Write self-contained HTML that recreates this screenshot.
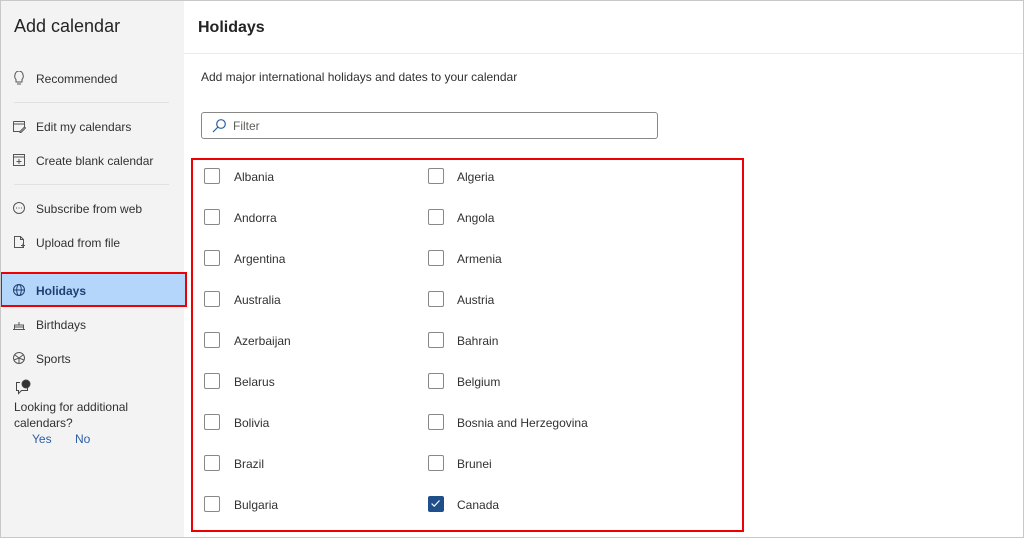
<!DOCTYPE html>
<html><head><style>
*{margin:0;padding:0;box-sizing:border-box}
body{width:1024px;height:538px;font-family:"Liberation Sans",sans-serif;background:#fff;position:relative;overflow:hidden;color:#323130}
.frame{position:absolute;left:0;top:0;width:1024px;height:538px;border:1px solid #c8c8c8;pointer-events:none;z-index:9}
.side{position:absolute;left:0;top:0;width:184px;height:538px;background:#f3f3f3}
.t{position:absolute;font-size:12px;white-space:nowrap}
.h1{position:absolute;left:14px;top:16px;font-size:18px;color:#242424}
.sep{position:absolute;left:14px;width:155px;height:1px;background:#e1e1e1}
.ic{position:absolute;left:12px;width:14px;height:14px}
.cb{position:absolute;width:16px;height:16px;border:1px solid #8a8886;border-radius:2px;background:#fff}
</style></head><body>
<div class="side"></div>
<div class="h1">Add calendar</div>
<svg class="ic" style="top:71px" viewBox="0 0 14 14" fill="none" stroke="#555" stroke-width="1"><path d="M4 8.5C2.5 7 2.5 5 3 4a4 4 0 0 1 8 0c.5 1 .5 3-1 4.5V11H4z M5 13h4"/></svg>
<div class="t" style="left:36px;top:72px">Recommended</div>
<div class="sep" style="top:102px"></div>
<svg class="ic" style="top:119px" viewBox="0 0 14 14" fill="none" stroke="#555" stroke-width="1"><path d="M1.5 2.5h11v5M1.5 2.5v10h6M1.5 5h11M8 12.5l4.5-4.5 1 1L9 13.5H8z"/></svg>
<div class="t" style="left:36px;top:120px">Edit my calendars</div>
<svg class="ic" style="top:153px" viewBox="0 0 14 14" fill="none" stroke="#555" stroke-width="1"><path d="M1.5 1.5h11v11h-11zM1.5 4h11M7 6v5M4.5 8.5h5"/></svg>
<div class="t" style="left:36px;top:154px">Create blank calendar</div>
<div class="sep" style="top:184px"></div>
<svg class="ic" style="top:201px" viewBox="0 0 14 14" fill="none" stroke="#555" stroke-width="1"><circle cx="7" cy="7" r="5.5"/><path d="M4 7h1M6.5 7h1M9 7h1"/></svg>
<div class="t" style="left:36px;top:202px">Subscribe from web</div>
<svg class="ic" style="top:235px" viewBox="0 0 14 14" fill="none" stroke="#555" stroke-width="1"><path d="M2.5 1.5h6l3 3v8h-9zM8.5 1.5v3h3M9 10.5h4M11 8.5v4"/></svg>
<div class="t" style="left:36px;top:236px">Upload from file</div>
<div style="position:absolute;left:0;top:272px;width:187px;height:35px;background:#b4d6fa;border:2px solid #e00"></div>
<svg class="ic" style="top:283px" viewBox="0 0 14 14" fill="none" stroke="#1f3f73" stroke-width="1"><circle cx="7" cy="7" r="5.5"/><ellipse cx="7" cy="7" rx="2.3" ry="5.5"/><path d="M1.5 7h11"/></svg>
<div class="t" style="left:36px;top:284px;font-weight:bold;color:#1f3f73">Holidays</div>
<svg class="ic" style="top:317px" viewBox="0 0 14 14" fill="none" stroke="#555" stroke-width="1"><path d="M1 12.5h12M2.5 12.5V8h9v4.5M2.5 10h9M7 8V5"/></svg>
<div class="t" style="left:36px;top:318px">Birthdays</div>
<svg class="ic" style="top:351px" viewBox="0 0 14 14" fill="none" stroke="#555" stroke-width="1"><circle cx="7" cy="7" r="5.5"/><path d="M3 4l4 3 4-3M7 7v5.5M2 9l5-2 5 2"/></svg>
<div class="t" style="left:36px;top:352px">Sports</div>
<svg style="position:absolute;left:14px;top:379px;width:17px;height:16px" viewBox="0 0 17 16" fill="none" stroke="#444" stroke-width="1"><path d="M6 3.5H2.5v8h2v3l3-3h6v-3"/><circle cx="12" cy="5" r="4" fill="#333"/></svg>
<div class="t" style="left:14px;top:399px;line-height:16px;color:#323130">Looking for additional<br>calendars?</div>
<div class="t" style="left:32px;top:432px;color:#2b5ea8">Yes</div>
<div class="t" style="left:75px;top:432px;color:#2b5ea8">No</div>

<div class="t" style="left:198px;top:19px;font-size:16px;font-weight:bold;color:#242424">Holidays</div>
<div style="position:absolute;left:184px;top:53px;width:840px;height:1px;background:#ebebeb"></div>
<div class="t" style="left:201px;top:70px;color:#323130">Add major international holidays and dates to your calendar</div>
<div style="position:absolute;left:201px;top:112px;width:457px;height:27px;border:1px solid #8a8886;border-radius:3px"></div>
<svg style="position:absolute;left:211px;top:118px;width:16px;height:16px" viewBox="0 0 16 16" fill="none" stroke="#2b5ea8" stroke-width="1.2"><circle cx="10" cy="6" r="4.3"/><path d="M7 9l-5 5"/></svg>
<div class="t" style="left:233px;top:119px;color:#605e5c">Filter</div>
<div style="position:absolute;left:191px;top:158px;width:553px;height:374px;border:2px solid #e00"></div>
<div id="list"></div>
<script></script>
<div class="cb" style="left:204px;top:168px"></div><div class="t" style="left:234px;top:170px">Albania</div>
<div class="cb" style="left:428px;top:168px"></div><div class="t" style="left:457px;top:170px">Algeria</div>
<div class="cb" style="left:204px;top:209px"></div><div class="t" style="left:234px;top:211px">Andorra</div>
<div class="cb" style="left:428px;top:209px"></div><div class="t" style="left:457px;top:211px">Angola</div>
<div class="cb" style="left:204px;top:250px"></div><div class="t" style="left:234px;top:252px">Argentina</div>
<div class="cb" style="left:428px;top:250px"></div><div class="t" style="left:457px;top:252px">Armenia</div>
<div class="cb" style="left:204px;top:291px"></div><div class="t" style="left:234px;top:293px">Australia</div>
<div class="cb" style="left:428px;top:291px"></div><div class="t" style="left:457px;top:293px">Austria</div>
<div class="cb" style="left:204px;top:332px"></div><div class="t" style="left:234px;top:334px">Azerbaijan</div>
<div class="cb" style="left:428px;top:332px"></div><div class="t" style="left:457px;top:334px">Bahrain</div>
<div class="cb" style="left:204px;top:373px"></div><div class="t" style="left:234px;top:375px">Belarus</div>
<div class="cb" style="left:428px;top:373px"></div><div class="t" style="left:457px;top:375px">Belgium</div>
<div class="cb" style="left:204px;top:414px"></div><div class="t" style="left:234px;top:416px">Bolivia</div>
<div class="cb" style="left:428px;top:414px"></div><div class="t" style="left:457px;top:416px">Bosnia and Herzegovina</div>
<div class="cb" style="left:204px;top:455px"></div><div class="t" style="left:234px;top:457px">Brazil</div>
<div class="cb" style="left:428px;top:455px"></div><div class="t" style="left:457px;top:457px">Brunei</div>
<div class="cb" style="left:204px;top:496px"></div><div class="t" style="left:234px;top:498px">Bulgaria</div>
<div class="cb" style="left:428px;top:496px;background:#1f4f8a;border-color:#1f4f8a"><svg viewBox="0 0 16 16" width="14" height="14" fill="none" stroke="#fff" stroke-width="1.3"><path d="M3 7.5l3 3 6-6.5"/></svg></div><div class="t" style="left:457px;top:498px">Canada</div>
<div class="frame"></div>
</body></html>
